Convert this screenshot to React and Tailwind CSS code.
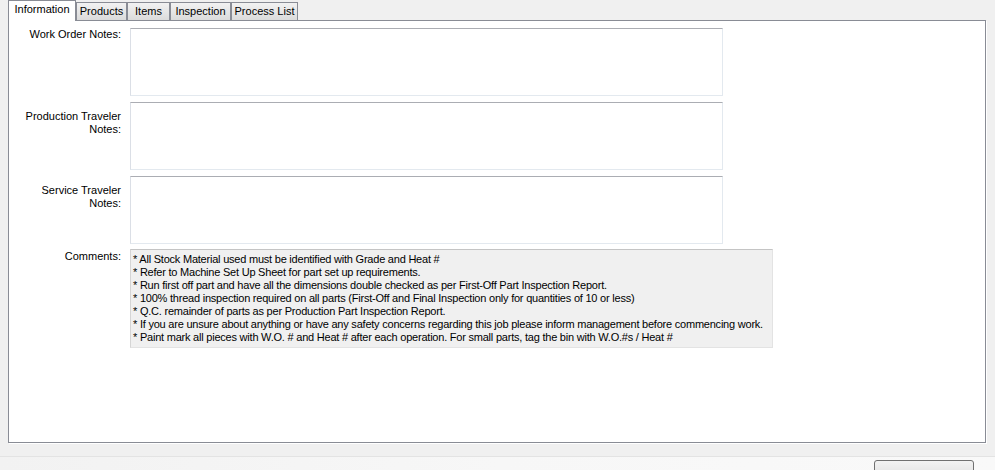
import { useState } from "react";

const tabs = [
  { name: "Information", w: "w-[68px]" },
  { name: "Products", w: "w-[51px]" },
  { name: "Items", w: "w-[43px]" },
  { name: "Inspection", w: "w-[61px]" },
  { name: "Process List", w: "w-[67px]" },
];

const comments = [
  "* All Stock Material used must be identified with Grade and Heat #",
  "* Refer to Machine Set Up Sheet for part set up requirements.",
  "* Run first off part and have all the dimensions double checked as per First-Off Part Inspection Report.",
  "* 100% thread inspection required on all parts (First-Off and Final Inspection only for quantities of 10 or less)",
  "* Q.C. remainder of parts as per Production Part Inspection Report.",
  "* If you are unsure about anything or have any safety concerns regarding this job please inform management before commencing work.",
  "* Paint mark all pieces with W.O. # and Heat # after each operation. For small parts, tag the bin with W.O.#s / Heat #",
];

function NoteBox({ label, labelPad }) {
  return (
    <div className="flex gap-[9px]">
      <div className={`w-[112px] text-right leading-[13px] ${labelPad}`}>{label}</div>
      <textarea
        className="w-[593px] h-[68px] resize-none bg-white border border-[#e3e9ef] border-t-[#abadb3] border-l-[#dbdfe6] outline-none"
      />
    </div>
  );
}

export default function App() {
  const [active, setActive] = useState(0);

  return (
    <div
      className="w-[995px] h-[470px] bg-[#f0f0f0] text-[11px] text-black overflow-hidden flex flex-col"
      style={{ fontFamily: "Tahoma, 'Liberation Sans', Arial, sans-serif" }}
    >
      {/* tab strip */}
      <div className="flex items-end h-[21px] pl-[8px] -mb-px relative z-10">
        {tabs.map((t, i) =>
          i === active ? (
            <div
              key={t.name}
              onClick={() => setActive(i)}
              className={`${t.w} h-[21px] bg-white border border-b-0 border-[#898c95] flex items-start justify-center pt-[2px] leading-[13px]`}
            >
              {t.name}
            </div>
          ) : (
            <div
              key={t.name}
              onClick={() => setActive(i)}
              className={`${t.w} h-[18px] mb-px bg-gradient-to-b from-[#f2f2f2] to-[#dbdbdb] border border-[#898c95] border-b-0 flex items-start justify-center pt-[2px] leading-[13px]`}
            >
              {t.name}
            </div>
          )
        )}
      </div>

      {/* tab panel */}
      <div className="ml-[8px] mr-[9px] h-[423px] bg-white border border-[#898c95] shadow-[1px_1px_0_#ffffff] pt-[7px]">
        <div className="flex flex-col gap-[6px]">
          <NoteBox label="Work Order Notes:" labelPad="pt-0" />
          <NoteBox label={<>Production Traveler<br />Notes:</>} labelPad="pt-[8px]" />
          <NoteBox label={<>Service Traveler<br />Notes:</>} labelPad="pt-[8px]" />
        </div>
        <div className="flex gap-[9px] mt-[5px]">
          <div className="w-[112px] text-right leading-[13px] pt-[1px]">Comments:</div>
          <div className="w-[643px] h-[99px] bg-[#f0f0f0] border border-[#e3e3e3] border-t-[#c4c4c4] border-l-[#d5d5d5] pl-[2px] pt-[3px] leading-[13px] tracking-[-0.22px] whitespace-nowrap overflow-hidden">
            {comments.map((c) => (
              <div key={c}>{c}</div>
            ))}
          </div>
        </div>
      </div>

      {/* footer */}
      <div className="mt-[13px] h-[14px] border-t border-[#e3e3e3] bg-gradient-to-r from-[#f2f2f2] via-[#f7f7f7] to-[#f9f9f9] flex justify-end pr-[21px] pt-[3px]">
        <button className="w-[100px] h-[22px] rounded-[3px] border border-[#707070] bg-gradient-to-b from-[#f2f2f2] to-[#dddddd]" />
      </div>
    </div>
  );
}
